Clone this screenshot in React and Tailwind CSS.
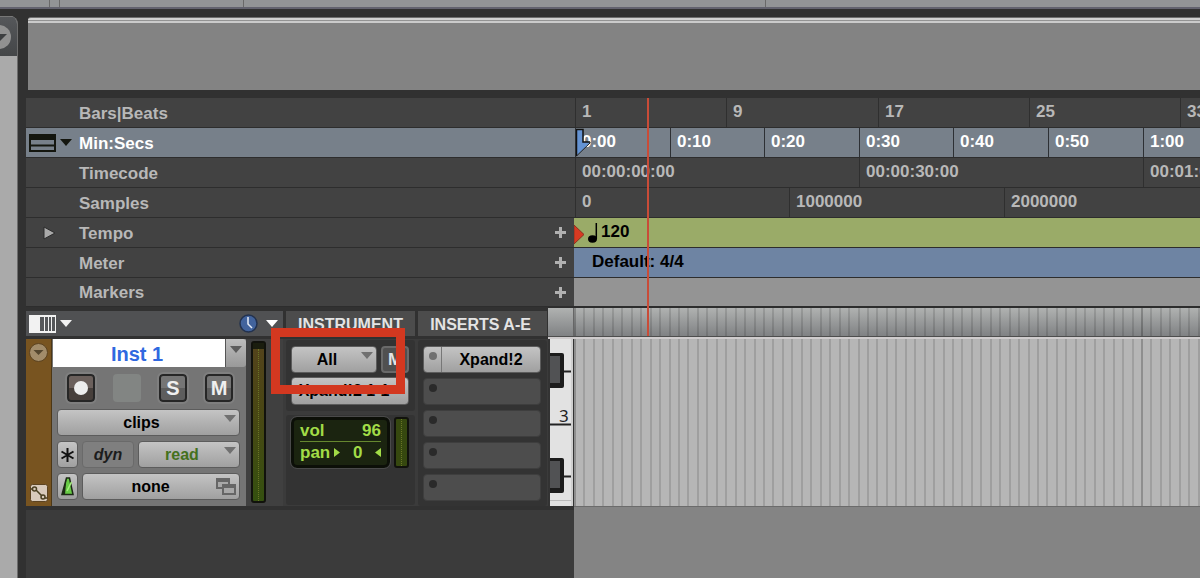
import { useState } from 'react';

const rulers = [
  {
    key: 'bars',
    title: 'Bars|Beats',
    cells: [
      { text: '1', width: 'w-[151px]' },
      { text: '9', width: 'w-[152px]' },
      { text: '17', width: 'w-[151px]' },
      { text: '25', width: 'w-[151px]' },
      { text: '33', width: 'w-[151px]' },
    ],
  },
  {
    key: 'minsecs',
    title: 'Min:Secs',
    active: true,
    cells: [
      { text: '0:00', width: 'w-[95px]' },
      { text: '0:10', width: 'w-[94px]' },
      { text: '0:20', width: 'w-[95px]' },
      { text: '0:30', width: 'w-[94px]' },
      { text: '0:40', width: 'w-[95px]' },
      { text: '0:50', width: 'w-[95px]' },
      { text: '1:00', width: 'w-[95px]' },
    ],
  },
  {
    key: 'timecode',
    title: 'Timecode',
    cells: [
      { text: '00:00:00:00', width: 'w-[284px]' },
      { text: '00:00:30:00', width: 'w-[284px]' },
      { text: '00:01:00:00', width: 'w-[284px]' },
    ],
  },
  {
    key: 'samples',
    title: 'Samples',
    cells: [
      { text: '0', width: 'w-[214px]' },
      { text: '1000000', width: 'w-[215px]' },
      { text: '2000000', width: 'w-[214px]' },
    ],
  },
];

const GRID_STEP = 9.45;
const gridLines = Array.from({ length: 400 }, (_, i) => Math.round(i * GRID_STEP));

const raised =
  'rounded-[4px] border border-[#5c5c5c] bg-linear-to-b from-[#c4c4c4] to-[#a0a0a0] text-base leading-5 font-bold';

function Chevron({ className }) {
  return (
    <svg className={className} viewBox="0 0 12 7" width="12" height="7" fill="currentColor" aria-hidden="true">
      <path d="M0 0h12L6 7z" />
    </svg>
  );
}

function GridLines() {
  return (
    <svg className="block w-full h-full" aria-hidden="true">
      {gridLines.map((x, i) => (
        <rect key={x} x={x} y="0" width="2" height="100%" fill="#000" opacity={i % 60 === 0 ? 0.22 : 0.12} />
      ))}
    </svg>
  );
}

function Dropdown({ label, value, options, className, textClass }) {
  const [selected, setSelected] = useState(value);

  return (
    <div className={`relative min-w-0 ${className}`}>
      <select
        aria-label={label}
        value={selected}
        onChange={(e) => setSelected(e.target.value)}
        className={`${raised} ${textClass} block w-full h-[27px] appearance-none [text-align-last:center]`}
      >
        {options.map((option) => (
          <option key={option}>{option}</option>
        ))}
      </select>
      <Chevron className="absolute right-1 top-[6px] text-[#707070] pointer-events-none" />
    </div>
  );
}

function RulerRow({ title, active, expandable, addable, last, children }) {
  return (
    <div className={`flex border-b border-[#2d2d2d] ${last ? 'h-[29px]' : 'h-[30px]'}`}>
      <div
        className={`w-[548px] shrink-0 flex items-center pl-[3px] pr-2 ${
          active ? 'bg-[#77808a] text-white' : 'bg-[#424242] text-[#b8b8b8]'
        }`}
      >
        <div className="w-[50px] shrink-0 flex items-center gap-1">
          {active && (
            <button aria-label="Ruler view" className="flex items-center gap-1 text-[#14160f]">
              <svg width="27" height="18" viewBox="0 0 27 18" fill="none" className="shrink-0" aria-hidden="true">
                <rect x="1" y="1" width="25" height="16" stroke="currentColor" strokeWidth="2" />
                <path d="M1 1h25v5H1z" fill="currentColor" />
                <path d="M1 11.500h25" stroke="currentColor" strokeWidth="2" />
              </svg>
              <Chevron className="shrink-0" />
            </button>
          )}
          {expandable && (
            <button aria-label="Expand tempo" className="ml-[14px]">
              <svg width="13" height="14" viewBox="0 0 13 14" aria-hidden="true">
                <path d="M1 1v12l11-6z" fill="#a9a9a9" stroke="#2b2b2b" />
              </svg>
            </button>
          )}
        </div>
        <span className="flex-1 pt-[2px]">{title}</span>
        {addable && (
          <button aria-label={`Add ${title}`}>
            <svg width="11" height="11" viewBox="0 0 11 11" className="block" aria-hidden="true">
              <path d="M5.500 0v11M0 5.500h11" stroke="#b0b0b0" strokeWidth="3" />
            </svg>
          </button>
        )}
      </div>
      {children}
    </div>
  );
}

function Rulers() {
  return (
    <div className="text-[17px] leading-5 font-bold">
      {rulers.map(({ key, title, active, cells }) => (
        <RulerRow key={key} title={title} active={active}>
          <div
            className={`flex-1 min-w-0 flex overflow-hidden pl-px ${
              active ? 'bg-[#77808a] text-white' : 'bg-[#424242] text-[#b8b8b8]'
            }`}
          >
            {cells.map(({ text, width }, i) => (
              <div
                key={text}
                className={`${width} relative shrink-0 flex items-center border-l pl-[6px] pb-px ${
                  active ? 'border-[#2d3034]' : 'border-[#2f2f2f]'
                }`}
              >
                {text}
                {active && i === 0 && (
                  <svg className="absolute left-0 top-0" width="16" height="29" viewBox="0 0 16 29" aria-hidden="true">
                    <path d="M0.500 1.500h6.500v12.500h7.500L0.500 28z" fill="#6493d3" />
                    <path d="M0.500 28V1.500h6.500v12.500h7" fill="none" stroke="#111" strokeWidth="1.500" />
                    <path d="M14.500 14.500L0.500 28" stroke="#222" />
                  </svg>
                )}
              </div>
            ))}
          </div>
        </RulerRow>
      ))}

      <RulerRow title="Tempo" expandable addable>
        <div className="flex-1 flex items-center gap-[3px] bg-[#9aab68] text-black">
          <svg width="11" height="21" viewBox="0 0 11 21" className="self-end mb-[2px]" aria-hidden="true">
            <path d="M0 1l10 9.500L0 20z" fill="#d83a22" stroke="#8c3220" />
          </svg>
          <svg width="10" height="20" viewBox="0 0 10 20" className="self-end mb-1" aria-hidden="true">
            <ellipse cx="4.500" cy="16" rx="4.500" ry="3.700" fill="#000" />
            <path d="M8.300 0v16" stroke="#000" strokeWidth="1.500" />
          </svg>
          <span className="pb-[2px]">120</span>
        </div>
      </RulerRow>
      <RulerRow title="Meter" addable>
        <div className="flex-1 flex items-center bg-[#6e84a3] text-black pl-[18px] pb-[2px]">Default: 4/4</div>
      </RulerRow>
      <RulerRow title="Markers" addable last>
        <div className="flex-1 bg-[#949494]" />
      </RulerRow>
    </div>
  );
}

function ColumnHeaders() {
  return (
    <div className="flex gap-[3px] h-[25px] text-base leading-5 font-bold text-[#e4e4e4]">
      <div className="w-[257px] flex items-center justify-between bg-[#505153] pl-[3px] pr-[5px]">
        <button aria-label="Edit window view" className="flex items-center gap-1 text-[#f2f2f2]">
          <svg width="27" height="18" viewBox="0 0 27 18" aria-hidden="true">
            <path d="M0 0h27v18H0z" fill="#f2f2f2" />
            <path d="M11 2h4v14h-4zM16 2h3v14h-3zM20 2h2v14h-2zM23 2h3v14h-3z" fill="#55575a" />
          </svg>
          <Chevron />
        </button>
        <div className="flex items-center gap-2">
          <button aria-label="Timebase">
            <svg width="19" height="19" viewBox="0 0 19 19" className="block" aria-hidden="true">
              <circle cx="9.500" cy="9.500" r="8.500" fill="#42639c" stroke="#23324e" strokeWidth="1.500" />
              <path d="M9 3v7l4 4" fill="none" stroke="#e8eef8" strokeWidth="1.500" />
            </svg>
          </button>
          <button aria-label="Track options" className="text-white">
            <Chevron />
          </button>
        </div>
      </div>
      <div className="w-[129px] flex items-center justify-center bg-[#4c4c4c] pt-[2px]">INSTRUMENT</div>
      <div className="w-[129px] flex items-center justify-center bg-[#4c4c4c] pt-[2px] pr-1">INSERTS A-E</div>
    </div>
  );
}

function SquareButton({ label, tint = 'from-[#757575] to-[#5d5d5d]', children }) {
  return (
    <button
      aria-label={label}
      className={`${tint} w-7 h-7 flex items-center justify-center rounded-[4px] border-2 border-[#262626] outline-2 outline-[#7f7f7f] bg-linear-to-b from-50% to-50% text-[#efefef] text-[20px] leading-5 font-bold`}
    >
      {children}
    </button>
  );
}

function TrackControls() {
  const [name, setName] = useState('Inst 1');

  return (
    <div className="w-[220px] shrink-0 flex bg-[#757575]">
      <div className="w-[26px] shrink-0 flex flex-col items-center justify-between bg-[#785420] border-r border-[#4c3716] pt-1 pb-1">
        <button aria-label="Track color">
          <svg width="19" height="19" viewBox="0 0 19 19" className="block" aria-hidden="true">
            <circle cx="9.500" cy="9.500" r="9" fill="#a28c6a" stroke="#5c4320" />
            <path d="M4.500 7h10l-5 5z" fill="#54462e" />
          </svg>
        </button>
        <button aria-label="Automation lanes">
          <svg width="18" height="18" viewBox="0 0 18 18" className="block" aria-hidden="true">
            <rect x="0.500" y="0.500" width="17" height="17" rx="2" fill="#d8cabb" stroke="#5c4320" />
            <path d="M1 5h2M6 6l6 6M15 14h2" stroke="#4a4022" strokeWidth="1.500" />
            <circle cx="4.500" cy="5" r="2" fill="none" stroke="#4a4022" strokeWidth="1.500" />
            <circle cx="13" cy="13" r="2" fill="none" stroke="#4a4022" strokeWidth="1.500" />
          </svg>
        </button>
      </div>
      <div className="flex-1 min-w-0 flex flex-col">
        <div className="flex h-[28px] pl-px">
          <input
            aria-label="Track name"
            value={name}
            onChange={(e) => setName(e.target.value)}
            className="flex-1 min-w-0 h-[28px] pt-[2px] pr-1 bg-white text-[#2f68e0] text-[20px] leading-6 font-bold text-center"
          />
          <button
            aria-label="Track name menu"
            className="w-[21px] shrink-0 flex justify-center border-l border-[#555] bg-linear-to-b from-[#bdbdbd] to-[#999] pt-[7px] text-[#5c5c5c] rounded-r-[3px]"
          >
            <Chevron />
          </button>
        </div>
        <div className="flex justify-between pl-[15px] pr-[13px] pt-[7px]">
          <SquareButton label="Record enable" tint="from-[#6b605c] to-[#473f3b]">
            <span className="w-[14px] h-[14px] rounded-full bg-[#ededed]" />
          </SquareButton>
          <button aria-label="Input monitor" className="w-7 h-7 rounded-[4px] bg-[#828583]" />
          <SquareButton label="Solo">S</SquareButton>
          <SquareButton label="Mute">M</SquareButton>
        </div>
        <div className="flex flex-col gap-[5px] pl-[5px] pr-[6px] pt-[7px]">
          <Dropdown
            label="Track view"
            value="clips"
            options={['clips', 'notes', 'volume']}
            textClass="pr-[14px] text-black"
            className="w-full"
          />
          <div className="flex gap-1">
            <button
              aria-label="Elastic audio"
              className={`${raised} w-[21px] h-[27px] shrink-0 flex items-center justify-center`}
            >
              <svg width="13" height="14" viewBox="0 0 13 14" className="shrink-0" aria-hidden="true">
                <path d="M6.500 0v14M.5 3.500l12 7M.5 10.500l12-7" stroke="#111" strokeWidth="2" />
              </svg>
            </button>
            <button className="w-[52px] h-[27px] shrink-0 rounded-[4px] border border-[#6a6a6a] bg-[#7f7f7f] text-[#1c1c1c] text-base font-bold italic">
              dyn
            </button>
            <Dropdown
              label="Automation mode"
              value="read"
              options={['read', 'write', 'touch']}
              textClass="pr-[14px] text-[#44711c]"
              className="flex-1"
            />
          </div>
          <div className="flex gap-1">
            <button
              aria-label="Timebase mode"
              className={`${raised} w-[21px] h-[27px] shrink-0 flex items-center justify-center`}
            >
              <svg width="13" height="19" viewBox="0 0 13 19" className="shrink-0" aria-hidden="true">
                <path d="M5.500 1h3L12 17.500H1z" fill="#67cb45" stroke="#1d2a16" strokeWidth="1.500" />
                <path d="M5.500 1L1 17.500h3z" fill="#1d2a16" />
                <path d="M6 14l4.500-9" stroke="#a4f07c" strokeWidth="1.500" />
              </svg>
            </button>
            <button className={`${raised} flex-1 min-w-0 h-[27px] flex items-center text-black`}>
              <span className="flex-1 pl-[2px]">none</span>
              <svg width="20" height="17" viewBox="0 0 20 17" className="mr-[3px]" fill="#a8a8a8" aria-hidden="true">
                <path d="M1 1h12v9H1zM1 3h12" stroke="#666" strokeWidth="2" />
                <path d="M7 7h12v9H7zM7 9h12" stroke="#666" strokeWidth="2" />
              </svg>
            </button>
          </div>
        </div>
      </div>
    </div>
  );
}

function LevelMeter({ className, cap }) {
  return (
    <div className={`flex flex-col rounded-[3px] border-2 border-[#11120c] ${className}`}>
      {cap && <div className="h-[6px] shrink-0 bg-[#1a1d0e]" />}
      <div className="mx-auto w-px flex-1 border-l border-dotted border-[#6a7626]" />
    </div>
  );
}

function InstrumentColumn() {
  return (
    <div className="w-[129px] flex flex-col gap-1">
      <div className="h-[71px] rounded-[3px] bg-[#333] pl-[5px] pr-[6px] pt-[6px] flex flex-col gap-1">
        <div className="flex gap-1">
          <Dropdown
            label="MIDI input"
            value="All"
            options={['All', 'None']}
            textClass="pr-[14px] text-black"
            className="w-[86px]"
          />
          <button
            aria-label="Instrument mute"
            className="flex-1 h-[27px] rounded-[4px] border-2 border-[#6a6a6a] bg-[#505050] text-[#e4e4e4] text-[17px] font-bold leading-5"
          >
            M
          </button>
        </div>
        <button className={`${raised} h-[28px] pr-3 text-black whitespace-nowrap`}>Xpand!2 1-1</button>
      </div>
      <div className="flex-1 rounded-[3px] bg-[#333] px-[5px] pt-[2px] mb-px flex items-start gap-1">
        <div className="w-[99px] h-[51px] rounded-[6px] border-[3px] border-[#0c0f08] bg-[#1b2410] outline outline-[#4a4a4a] px-[6px] text-[17px] leading-[21px] font-bold text-[#a2dc47]">
          <div className="flex justify-between border-b border-[#66872f]">
            <span>vol</span>
            <span>96</span>
          </div>
          <div className="flex items-center justify-between">
            <span className="flex items-center gap-1">
              pan
              <svg width="6" height="9" viewBox="0 0 6 9" fill="currentColor" aria-hidden="true">
                <path d="M0 0l6 4.500L0 9z" />
              </svg>
            </span>
            <span>0</span>
            <svg width="6" height="9" viewBox="0 0 6 9" fill="currentColor" aria-hidden="true">
              <path d="M6 0v9L0 4.500z" />
            </svg>
          </div>
        </div>
        <LevelMeter className="w-[15px] h-[51px] bg-[#36480f]" />
      </div>
    </div>
  );
}

function InsertsColumn() {
  return (
    <div className="w-[129px] rounded-[3px] bg-[#333] pl-[5px] pr-[6px] pt-[6px] flex flex-col gap-[5px]">
      <div className={`${raised} h-[27px] flex items-stretch text-black`}>
        <button aria-label="Insert A" className="w-[18px] shrink-0 flex justify-center border-r border-[#777] pt-[5px]">
          <span className="w-2 h-2 rounded-full bg-[#707070]" />
        </button>
        <button className="flex-1">Xpand!2</button>
      </div>
      {['B', 'C', 'D', 'E'].map((slot) => (
        <button
          key={slot}
          aria-label={`Insert ${slot}`}
          className="h-[27px] rounded-[4px] bg-[#4d4d4d] border border-[#3e3e3e] pl-[5px] pt-[5px] flex items-start"
        >
          <span className="w-2 h-2 rounded-full bg-[#2a2a2a]" />
        </button>
      ))}
    </div>
  );
}

function Keyboard() {
  return (
    <svg width="26" height="167" viewBox="0 0 26 167" className="shrink-0 block" aria-hidden="true">
      <path d="M0 0h26v167H0z" fill="#333" />
      <path d="M2 0h23v167H2z" fill="#e2e2e2" />
      <path d="M24 0v167" stroke="#bbb" />
      <path d="M2 14h12q2 0 2 2v31q0 2-2 2H2z" fill="#1c1c1c" />
      <path d="M2 17h10v27H2z" fill="#515254" />
      <path d="M2 119h12q2 0 2 2v31q0 2-2 2H2z" fill="#1c1c1c" />
      <path d="M2 122h10v27H2z" fill="#515254" />
      <path d="M16 32.500h7M16 137.500h7M2 85.500h21" stroke="#222" strokeWidth="2" />
      <path d="M2 161.500h21" stroke="#bbb" />
      <text x="11" y="83" fontSize="17" fill="#222" fontFamily="Noto Sans, sans-serif">
        3
      </text>
    </svg>
  );
}

function Tracks() {
  return (
    <div className="flex">
      <div className="w-[522px] shrink-0 pt-1 flex flex-col gap-[3px] bg-[#313131]">
        <ColumnHeaders />
        <div className="h-[167px] flex bg-[#3b3b3b]">
          <TrackControls />
          <div className="w-[37px] shrink-0 mr-[3px] bg-[#404040] pl-[5px] pt-[2px]">
            <LevelMeter
              cap
              className="w-[15px] h-[162px] bg-linear-to-b from-[#54431c] via-[#4a4614] via-40% to-[#34500f]"
            />
          </div>
          <div className="flex gap-[3px] pt-px">
            <InstrumentColumn />
            <InsertsColumn />
          </div>
        </div>
      </div>
      <div className="flex-1 min-w-0 border-t border-[#2d2d2d]">
        <div className="h-[29px] flex border-b border-[#4e4e4e] bg-linear-to-b from-[#b0b2b1] to-[#808284]">
          <div className="w-[26px] shrink-0 border-r border-[#666]" />
          <div className="flex-1 min-w-0 overflow-hidden">
            <GridLines />
          </div>
        </div>
        <div className="h-[2px] bg-[#cfcccd]" />
        <div className="flex h-[167px]">
          <Keyboard />
          <div className="flex-1 min-w-0 overflow-hidden bg-[#b6b6b6]">
            <GridLines />
          </div>
        </div>
      </div>
    </div>
  );
}

function App() {
  return (
    <div className="min-h-screen flex flex-col overflow-hidden bg-[#313131] font-['Liberation_Sans',Arial,sans-serif]">
      <header className="h-[9px] flex shrink-0 bg-[#929496] border-b-2 border-[#62626e]">
        <div className="w-[50px] border-r border-[#696969]" />
        <div className="w-[10px] border-r border-[#696969]" />
        <div className="w-[184px] border-r border-[#696969]" />
        <div className="w-[522px] border-r border-[#696969]" />
      </header>

      <div className="flex-1 flex">
        <aside className="w-[18px] shrink-0 mt-[7px] flex flex-col border-r border-[#6d6d6d] rounded-tr-[8px] overflow-hidden bg-[#aaa]">
          <div className="h-10 flex items-center bg-linear-to-b from-[#55575a] to-[#444648] border-t border-[#777]">
            <button aria-label="Track list menu">
              <svg width="12" height="24" viewBox="0 0 12 24" className="block" aria-hidden="true">
                <circle cx="-1" cy="12" r="12" fill="#919191" />
                <path d="M-7 9H7L0 16z" fill="#3d3f41" />
              </svg>
            </button>
          </div>
        </aside>

        <main className="flex-1 min-w-0 ml-2 flex flex-col">
          <div className="ml-[2px] mt-2 h-[73px] shrink-0 flex flex-col rounded-tl-[3px] overflow-hidden bg-[#838383] border-t border-[#6f6f6f]">
            <div className="h-[2px] bg-[#d2d2d2]" />
            <div className="h-px bg-[#939393]" />
            <div className="h-[2px] bg-[#cbcbcb]" />
          </div>

          <div className="relative flex-1 mt-2 flex flex-col">
            <Rulers />
            <Tracks />
            <div className="flex-1 flex">
              <div className="w-[548px] shrink-0 border-t-4 border-[#313131] bg-[#3b3b3b]" />
              <div className="flex-1 border-t border-[#6b6b6b] bg-[#848484]" />
            </div>

            {/* playhead */}
            <div className="absolute left-[621px] top-0 z-10 w-[2px] h-[238px] bg-[#c94c38]" />
            {/* highlight over the MIDI input selector */}
            <div className="absolute left-[245px] top-[230px] z-10 w-[134px] h-[66px] border-[9px] border-[#d33820] pointer-events-none" />
          </div>
        </main>
      </div>
    </div>
  );
}

export default App;
